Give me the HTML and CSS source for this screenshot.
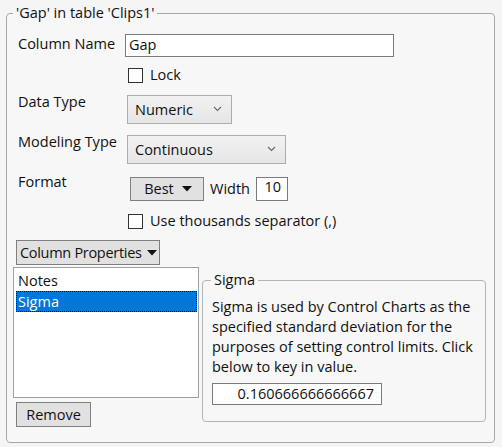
FILE: index.html
```html
<!DOCTYPE html>
<html>
<head>
<meta charset="utf-8">
<link rel="stylesheet" href="styles.css">
</head>
<body>
<fieldset class="panel">
  <legend class="panel-title">'Gap' in table 'Clips1'</legend>

  <div class="row row-name">
    <div class="label">Column Name</div>
    <div class="textbox name-box">Gap</div>
  </div>

  <div class="row row-check lock-row">
    <div class="label"></div>
    <span class="checkbox"></span><span class="check-text">Lock</span>
  </div>

  <div class="row row-combo">
    <div class="label">Data Type</div>
    <div class="combo combo-numeric"><span>Numeric</span>
      <svg class="chev" width="9" height="6" viewBox="0 0 9 6"><path d="M1 1 L4.5 4.5 L8 1" fill="none" stroke="#666" stroke-width="1.1"/></svg>
    </div>
  </div>

  <div class="row row-combo">
    <div class="label">Modeling Type</div>
    <div class="combo combo-cont"><span>Continuous</span>
      <svg class="chev" width="9" height="6" viewBox="0 0 9 6"><path d="M1 1 L4.5 4.5 L8 1" fill="none" stroke="#666" stroke-width="1.1"/></svg>
    </div>
  </div>

  <div class="row row-format">
    <div class="label">Format</div>
    <div class="button best-btn"><span>Best</span>
      <svg class="tri" width="10" height="6" viewBox="0 0 10 6"><path d="M0 0 H10 L5 5.5 Z" fill="#111"/></svg>
    </div>
    <span class="width-label">Width</span>
    <div class="textbox width-box">10</div>
  </div>

  <div class="row row-check sep-row">
    <div class="label"></div>
    <span class="checkbox"></span><span class="check-text">Use thousands separator (,)</span>
  </div>

  <div class="button props-btn"><span class="props-text">Column Properties</span>
    <svg class="tri" width="10" height="6" viewBox="0 0 10 6"><path d="M0 0 H10 L5 5.5 Z" fill="#111"/></svg>
  </div>

  <div class="props">
    <div class="props-left">
      <div class="listbox">
        <div class="item">Notes</div>
        <div class="item selected">Sigma</div>
      </div>
      <div class="button remove-btn">Remove</div>
    </div>

    <fieldset class="sigma">
      <legend class="sigma-title">Sigma</legend>
      <p class="desc">Sigma is used by Control Charts as the<br>specified standard deviation for the<br>purposes of setting control limits. Click<br>below to key in value.</p>
      <div class="textbox value-box">0.160666666666667</div>
    </fieldset>
  </div>
</fieldset>
</body>
</html>
```

FILE: styles.css
```css
html, body {
  margin: 0;
  padding: 0;
  background: #f5f5f5;
}

body {
  font-family: "Open Sans", "Noto Sans", sans-serif;
  font-size: 14.5px;
  line-height: 20px;
  color: #111;
  white-space: nowrap;
}

.panel {
  margin: 3px 7px 6px 6px;
  padding: 11px 6px 15px 6px;
  border: 1px solid #a8a8a8;
  border-radius: 4px;
  background: #f7f7f7;
  min-width: 0;
}

.panel-title {
  padding: 0 3px;
  margin-left: 0;
  line-height: 20px;
}

.row {
  display: flex;
  align-items: flex-start;
}

.label {
  width: 107px;
  padding-left: 5px;
  flex: none;
  line-height: 20px;
}

.textbox {
  box-sizing: border-box;
  background: #fff;
  border: 1px solid #7a7a7a;
  height: 23px;
  line-height: 20px;
  padding: 0 4px;
}

.name-box {
  width: 269px;
  padding-left: 3px;
}

.row-check {
  align-items: center;
  height: 20px;
}

.lock-row {
  margin-top: 8px;
}

.sep-row {
  margin-top: 10px;
}

.checkbox {
  box-sizing: border-box;
  width: 15px;
  height: 15px;
  border: 1px solid #333;
  background: #fff;
  margin-left: 3px;
  flex: none;
}

.check-text {
  margin-left: 7px;
}

.row-combo {
  margin-top: 7px;
}

.row-combo + .row-combo {
  margin-top: 8px;
}

.combo {
  box-sizing: border-box;
  margin-top: 3px;
  margin-left: 2px;
  height: 29px;
  border: 1px solid #adadad;
  background: linear-gradient(#f2f2f2, #e5e5e5);
  display: flex;
  align-items: center;
  justify-content: space-between;
  padding: 0 9px 0 7px;
}

.combo-numeric {
  width: 105px;
}

.combo-cont {
  width: 159px;
}

.chev {
  display: block;
  flex: none;
  margin-top: -2px;
}

.row-format {
  margin-top: 8px;
}

.button {
  box-sizing: border-box;
  background: #e1e1e1;
  border: 1px solid #7f7f7f;
  display: flex;
  align-items: center;
  justify-content: center;
  line-height: 20px;
}

.best-btn {
  width: 74px;
  height: 24px;
  margin-top: 5px;
  margin-left: 5px;
  gap: 8px;
  padding-left: 2px;
}

.tri {
  display: block;
  flex: none;
}

.width-label {
  margin-left: 6px;
  margin-top: 7px;
}

.width-box {
  width: 32px;
  height: 24px;
  margin-top: 5px;
  margin-left: 6px;
  text-align: right;
  padding: 0 6px 0 0;
  line-height: 18px;
}

.props-btn {
  width: 144px;
  height: 25px;
  margin-top: 9px;
  margin-left: 3px;
  gap: 5px;
  justify-content: flex-start;
  padding-left: 3px;
}

.props-text {
  letter-spacing: -0.3px;
}

.props {
  display: flex;
  align-items: flex-start;
  margin-top: 2px;
}

.props-left {
  width: 186px;
  flex: none;
}

.listbox {
  box-sizing: border-box;
  height: 131px;
  border: 1px solid #a0a0a0;
  background: #fff;
  padding: 2px 1px 2px 2px;
}

.item {
  height: 21px;
  line-height: 21px;
  padding-left: 2px;
}

.item.selected {
  background: #0078d7;
  color: #fff;
  outline: 1px dotted #111;
  outline-offset: -1px;
}

.remove-btn {
  width: 75px;
  height: 25px;
  margin-top: 4px;
  margin-left: 3px;
}

.sigma {
  box-sizing: border-box;
  margin: 3px 0 0 3px;
  width: 284px;
  height: 152px;
  padding: 7px 8px 0 9px;
  border: 1px solid #b4b4b4;
  border-radius: 4px;
  min-width: 0;
}

.sigma-title {
  padding: 0 3px;
  margin-left: -1px;
  line-height: 20px;
}

.desc {
  margin: 0;
  line-height: 20px;
}

.value-box {
  width: 170px;
  height: 22px;
  margin-top: 6px;
  text-align: right;
  padding: 0 7px 0 0;
  line-height: 20px;
}
```
